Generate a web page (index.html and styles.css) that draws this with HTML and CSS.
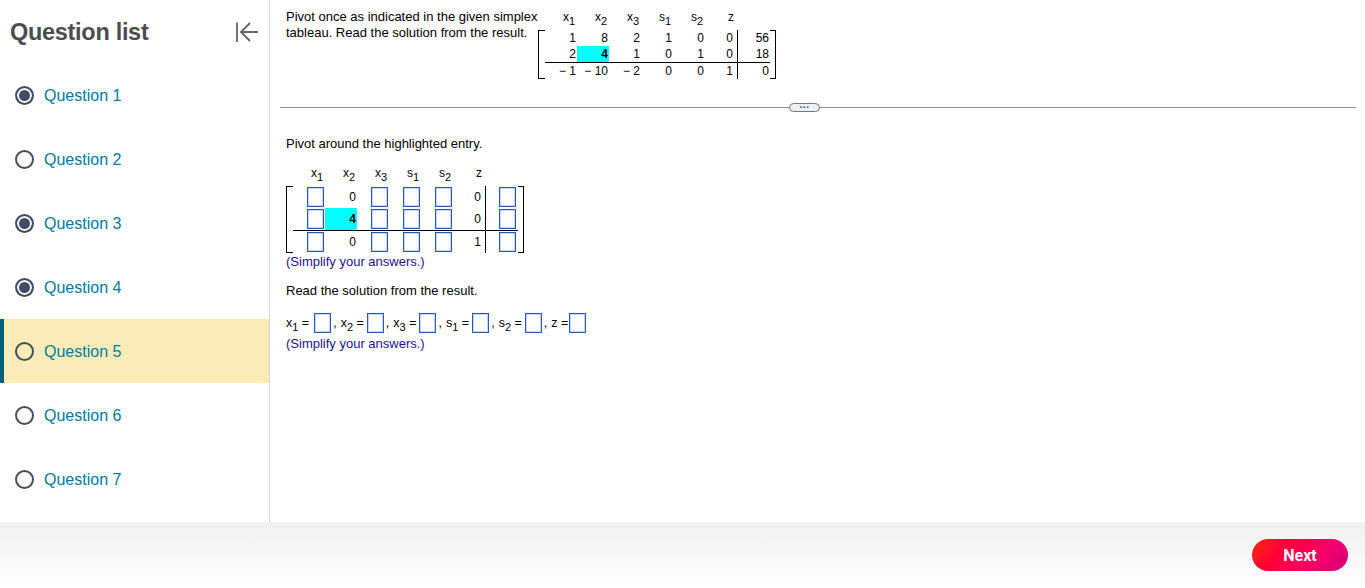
FILE: index.html
```html
<!DOCTYPE html>
<html lang="en">
<head>
<meta charset="utf-8">
<title>Question list</title>
<link rel="stylesheet" href="styles.css">
</head>
<body>
<div class="page">
  <aside class="sidebar">
    <header class="side-head">
      <h1 class="side-title">Question list</h1>
      <svg class="collapse" width="24" height="24" viewBox="0 0 24 24" aria-hidden="true"><path d="M2 2.500V22M23 12H6M15 3l-9 9 9 9" fill="none" stroke="#5f6769" stroke-width="1.800"/></svg>
    </header>
    <ul class="qlist">
      <li class="qitem"><span class="radio on"></span><span class="qlabel">Question 1</span></li>
      <li class="qitem"><span class="radio"></span><span class="qlabel">Question 2</span></li>
      <li class="qitem"><span class="radio on"></span><span class="qlabel">Question 3</span></li>
      <li class="qitem"><span class="radio on"></span><span class="qlabel">Question 4</span></li>
      <li class="qitem current"><span class="radio"></span><span class="qlabel">Question 5</span></li>
      <li class="qitem"><span class="radio"></span><span class="qlabel">Question 6</span></li>
      <li class="qitem"><span class="radio"></span><span class="qlabel">Question 7</span></li>
    </ul>
  </aside>
  <main class="main">
    <section class="prompt">
      <p class="prompt-text">Pivot once as indicated in the given simplex tableau. Read the solution from the result.</p>
      <div class="tab tab-top">
        <span class="h"></span><span class="h">x<sub>1</sub></span><span class="h">x<sub>2</sub></span><span class="h">x<sub>3</sub></span><span class="h">s<sub>1</sub></span><span class="h">s<sub>2</sub></span><span class="h zc">z</span><span class="h"></span><span class="h"></span>
        <span class="br brl"></span>
        <span class="br brr"></span>
        <span class="c">1</span><span class="c">8</span><span class="c">2</span><span class="c">1</span><span class="c">0</span><span class="c zc">0</span><span class="c">56</span>
        <span class="c rule">2</span><span class="c rule hl">4</span><span class="c rule">1</span><span class="c rule">0</span><span class="c rule">1</span><span class="c rule zc">0</span><span class="c rule">18</span>
        <span class="c">− 1</span><span class="c">− 10</span><span class="c">− 2</span><span class="c">0</span><span class="c">0</span><span class="c zc">1</span><span class="c">0</span>
      </div>
    </section>
    <div class="divider"><span class="more">...</span></div>
    <section class="work">
      <p class="line instr">Pivot around the highlighted entry.</p>
      <div class="tab tab-low">
        <span class="h"></span><span class="h">x<sub>1</sub></span><span class="h">x<sub>2</sub></span><span class="h">x<sub>3</sub></span><span class="h">s<sub>1</sub></span><span class="h">s<sub>2</sub></span><span class="h zc">z</span><span class="h"></span><span class="h"></span>
        <span class="br brl"></span>
        <span class="br brr"></span>
        <span class="c"><i class="box"></i></span><span class="c">0</span><span class="c"><i class="box"></i></span><span class="c"><i class="box"></i></span><span class="c"><i class="box"></i></span><span class="c zc">0</span><span class="c last"><i class="box"></i></span>
        <span class="c rule"><i class="box"></i></span><span class="c rule hl">4</span><span class="c rule"><i class="box"></i></span><span class="c rule"><i class="box"></i></span><span class="c rule"><i class="box"></i></span><span class="c rule zc">0</span><span class="c rule last"><i class="box"></i></span>
        <span class="c"><i class="box"></i></span><span class="c">0</span><span class="c"><i class="box"></i></span><span class="c"><i class="box"></i></span><span class="c"><i class="box"></i></span><span class="c zc">1</span><span class="c last"><i class="box"></i></span>
      </div>
      <p class="line hint first-hint">(Simplify your answers.)</p>
      <p class="line read">Read the solution from the result.</p>
      <div class="answers">
        <span class="lab lab-first">x<sub>1</sub> =</span><i class="box"></i><span class="sep">,</span>
        <span class="lab">x<sub>2</sub> =</span><i class="box"></i><span class="sep">,</span>
        <span class="lab">x<sub>3</sub> =</span><i class="box"></i><span class="sep">,</span>
        <span class="lab">s<sub>1</sub> =</span><i class="box"></i><span class="sep">,</span>
        <span class="lab">s<sub>2</sub> =</span><i class="box"></i><span class="sep">,</span>
        <span class="lab lab-z">z =</span><i class="box"></i>
      </div>
      <p class="line hint">(Simplify your answers.)</p>
    </section>
  </main>
  <footer class="footer"><button class="next" type="button">Next</button></footer>
</div>
</body>
</html>
```
FILE: styles.css
```css
* { box-sizing: border-box; }
html, body { margin: 0; padding: 0; }
body { font-family: "Liberation Sans", Arial, sans-serif; color: #000; background: #fff; }
.page {
  width: 1365px; height: 588px; overflow: hidden;
  display: grid; grid-template-columns: 270px 1fr; grid-template-rows: 522px 66px;
}
.sidebar { border-right: 1px solid #d3d3dc; }
.side-head { height: 63px; display: flex; align-items: center; justify-content: space-between; padding: 0 10px; }
.side-title { margin: 0; padding-top: 2px; font-size: 23.500px; font-weight: 700; letter-spacing: -0.300px; color: #4a4d4f; }
.collapse { display: block; }
.qlist { list-style: none; margin: 0; padding: 0; }
.qitem { height: 64px; display: flex; align-items: center; padding-left: 15px; gap: 10px; }
.qitem.current { background: #fbebb6; box-shadow: inset 4px 0 0 #00607a; }
.radio {
  width: 19px; height: 19px; border-radius: 50%; border: 2px solid #45505f; background: #fff; flex: none;
}
.current .radio { background: transparent; }
.radio.on { background: #3f4f63; box-shadow: inset 0 0 0 2px #fff; }
.qlabel { padding-top: 2px; font-size: 16px; color: #007c9c; }

.main { padding: 0 9px 0 10px; font-size: 13px; }
.prompt { height: 107px; display: flex; padding: 9px 0 0 6px; }
.prompt-text { width: 252px; margin: 0; line-height: 16px; }
.tab { display: grid; font-size: 12px; }
.tab-top {
  margin-top: -9px;
  grid-template-columns: 7px repeat(5, 32px) 33px 32px 6px;
  grid-template-rows: 30px 16px 17px 16px;
  align-self: flex-start;
}
.tab-low {
  margin-top: 13px;
  grid-template-columns: 7px repeat(5, 32px) 33px 32px 6px;
  grid-template-rows: 21px 22px 23px 22px;
}
.h { text-align: right; padding: 0 2px 0 0; line-height: 16px; align-self: end; white-space: nowrap; }
.tab-top .h { padding-bottom: 5px; }
.tab-low .h { padding-bottom: 5px; }
.h sub, .answers sub { font-size: 11px; line-height: 0; vertical-align: -4px; }
.c { display: flex; align-items: center; justify-content: flex-end; padding-right: 1px; white-space: nowrap; }
.h.zc, .c.zc { padding-right: 4px; }
.c.zc { border-right: 1px solid #000; }
.last { padding-right: 2px; }
.rule { border-bottom: 1px solid #000; }
.hl { background: #00ffff; font-weight: 700; }
.br { border: 1px solid #000; }
.brl { grid-column: 1; grid-row: 2 / span 3; border-right: 0; }
.brr { grid-column: 9; grid-row: 2 / span 3; border-left: 0; }
.box {
  display: block; width: 17px; height: 20px; border: 1px solid #2459c4; background: #fff; flex: none;
  box-shadow: inset 0 0 0 1px rgba(36, 89, 196, 0.25);
}

.divider { position: relative; height: 1px; background: #8a929c; }
.more {
  position: absolute; left: 509px; top: -4px; width: 31px; height: 9px;
  border: 1px solid #6f7a88; border-radius: 5px; background: #eef0f4;
  font-size: 10px; font-weight: 700; line-height: 1px; text-align: center; letter-spacing: 0.500px; color: #44505c;
}
.work { padding: 0 0 0 6px; }
.line { margin: 0; line-height: 16px; }
.instr { padding-top: 28px; }
.hint { color: #1c118e; }
.first-hint { margin-top: 1px; }
.read { padding-top: 13px; }
.answers { display: flex; align-items: center; margin-top: 14px; height: 20px; margin-bottom: 3px; font-size: 12.500px; }
.lab { margin-right: 3px; white-space: nowrap; }
.lab-first { margin-right: 5px; }
.lab-z { margin-right: 1px; }
.sep { width: 9.500px; padding-left: 2px; }

.footer {
  grid-column: 1 / -1; display: flex; justify-content: flex-end; align-items: flex-start;
  padding: 17px 17px 0 0; background: linear-gradient(#f1f1f1, #fff);
}
.next {
  width: 96px; height: 32px; border: 0; border-radius: 16px; padding: 0;
  background: linear-gradient(125deg, #ff2a10 0%, #ff0038 30%, #f5006a 70%, #d40078 100%);
  color: #fff; font: 700 16px "Roboto", "Liberation Sans", sans-serif;
}
```
